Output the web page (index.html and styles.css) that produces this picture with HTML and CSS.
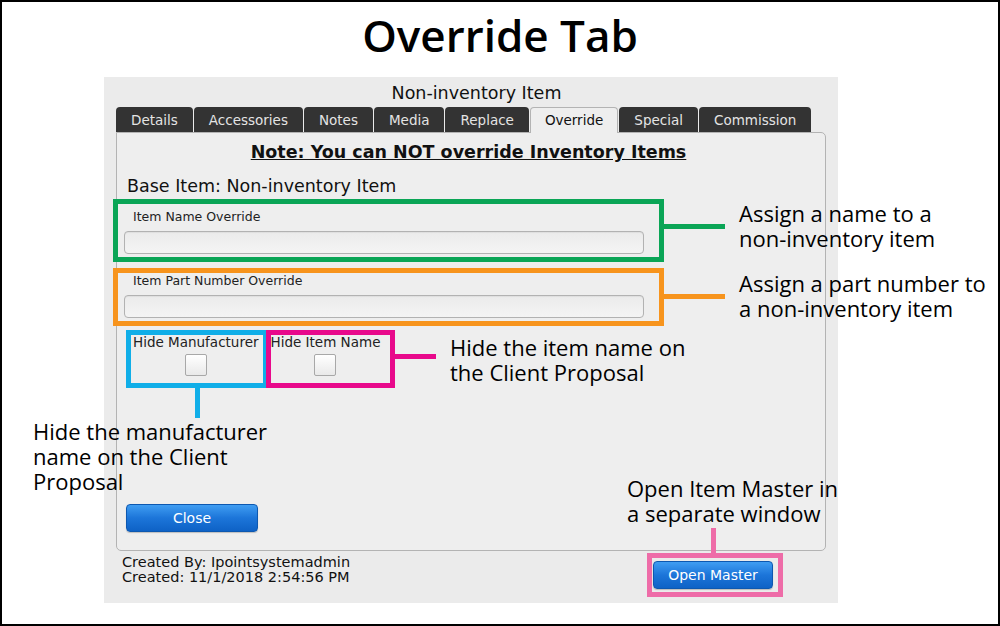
FILE: index.html
```html
<!DOCTYPE html>
<html>
<head>
<meta charset="utf-8">
<link rel="stylesheet" href="styles.css">
</head>
<body>
<div class="frame">
  <h1 class="title">Override Tab</h1>
  <div class="app">
    <div class="app-title">Non-inventory Item</div>
    <div class="tabs">
      <div class="tab">Details</div>
      <div class="tab">Accessories</div>
      <div class="tab">Notes</div>
      <div class="tab">Media</div>
      <div class="tab">Replace</div>
      <div class="tab tab-active">Override</div>
      <div class="tab">Special</div>
      <div class="tab">Commission</div>
    </div>
    <div class="panel">
      <div class="note">Note: You can NOT override Inventory Items</div>
      <div class="base">Base Item: Non-inventory Item</div>
      <div class="field-label first">Item Name Override</div>
      <div class="input"></div>
      <div class="field-label second">Item Part Number Override</div>
      <div class="input"></div>
      <div class="checks">
        <div class="check">
          <div class="check-label">Hide Manufacturer</div>
          <div class="check-box"></div>
        </div>
        <div class="check">
          <div class="check-label">Hide Item Name</div>
          <div class="check-box"></div>
        </div>
      </div>
      <div class="btn btn-close">Close</div>
    </div>
    <div class="footer">
      <div class="created">Created By: Ipointsystemadmin<br>Created: 11/1/2018 2:54:56 PM</div>
      <div class="btn btn-open">Open Master</div>
    </div>
  </div>

  <div class="ann-box ann-green"></div>
  <div class="ann-line ann-line-green"></div>
  <div class="ann-box ann-orange"></div>
  <div class="ann-line ann-line-orange"></div>
  <div class="ann-box ann-blue"></div>
  <div class="ann-line ann-line-blue"></div>
  <div class="ann-box ann-magenta"></div>
  <div class="ann-line ann-line-magenta"></div>
  <div class="ann-box ann-pink"></div>
  <div class="ann-line ann-line-pink"></div>

  <div class="ann-text ann-t-green">Assign a name to a<br>non-inventory item</div>
  <div class="ann-text ann-t-orange">Assign a part number to<br>a non-inventory item</div>
  <div class="ann-text ann-t-magenta">Hide the item name on<br>the Client Proposal</div>
  <div class="ann-text ann-t-blue">Hide the manufacturer<br>name on the Client<br>Proposal</div>
  <div class="ann-text ann-t-pink">Open Item Master in<br>a separate window</div>
</div>
</body>
</html>
```

FILE: styles.css
```css
html, body {
  margin: 0;
  padding: 0;
  background: #fff;
}

.frame {
  position: relative;
  width: 1000px;
  height: 626px;
  box-sizing: border-box;
  overflow: hidden;
  background: #fff;
  box-shadow: inset 0 0 0 2px #000;
  font-family: "DejaVu Sans", Verdana, sans-serif;
  color: #111;
}

.title {
  margin: 0;
  padding-top: 5px;
  height: 60px;
  font-family: "Open Sans", sans-serif;
  font-weight: 600;
  font-size: 44px;
  line-height: 60px;
  text-align: center;
  color: #000;
}

.app {
  margin-top: 12px;
  margin-left: 104px;
  width: 734px;
  height: 526px;
  box-sizing: border-box;
  padding: 6px 12px 0;
  background: #ebebeb;
}

.app-title {
  font-size: 17.5px;
  line-height: 20px;
  text-align: center;
  padding-left: 11px;
  color: #111;
}

.tabs {
  display: flex;
  gap: 1px;
  margin-top: 4px;
  height: 25px;
  align-items: flex-start;
}

.tab {
  height: 25px;
  box-sizing: border-box;
  padding: 2px 15px 0;
  line-height: 23px;
  font-size: 13.5px;
  background: #333;
  color: #e4e4e4;
  border-radius: 4px 4px 0 0;
}

.tab-active {
  position: relative;
  z-index: 2;
  height: 26px;
  margin-bottom: -1px;
  padding: 1px 14px 0;
  background: #eeeeee;
  color: #111;
  border: 1px solid #b3b3b3;
  border-bottom: none;
}

.panel {
  height: 419px;
  box-sizing: border-box;
  display: flex;
  flex-direction: column;
  align-items: flex-start;
  padding: 0 0 18px 7px;
  border: 1px solid #b3b3b3;
  border-radius: 0 5px 5px 5px;
  background: #eeeeee;
}

.note {
  align-self: stretch;
  margin-top: 9px;
  padding-right: 12px;
  font-size: 17.5px;
  font-weight: bold;
  line-height: 20px;
  text-align: center;
  text-decoration: underline;
  color: #111;
}

.base {
  margin-top: 14px;
  margin-left: 3px;
  font-size: 17.5px;
  line-height: 20px;
}

.field-label {
  margin-left: 9px;
  font-size: 12.5px;
  line-height: 16px;
  color: #222;
}

.field-label.first {
  margin-top: 13px;
}

.field-label.second {
  margin-top: 19px;
}

.input {
  margin-top: 6px;
  width: 520px;
  height: 23px;
  box-sizing: border-box;
  border: 1px solid #b2b2b2;
  border-radius: 4px;
  background: linear-gradient(#ebebeb, #f4f4f4);
  box-shadow: inset 0 1px 1px rgba(0, 0, 0, 0.06);
}

.checks {
  display: flex;
  gap: 12px;
  margin-top: 16px;
  margin-left: 9px;
}

.check {
  display: flex;
  flex-direction: column;
  align-items: center;
}

.check-label {
  font-size: 13.5px;
  line-height: 16px;
  color: #222;
}

.check-box {
  margin-top: 4px;
  width: 22px;
  height: 22px;
  box-sizing: border-box;
  border: 1px solid #a8a8a8;
  border-radius: 2px;
  background: linear-gradient(#ffffff, #e9e9e9);
}

.btn {
  box-sizing: border-box;
  height: 28px;
  border: 1px solid #0d58b0;
  border-radius: 4px;
  background: linear-gradient(#3f9df2, #1c75d9 50%, #0e62c6);
  color: #fff;
  font-size: 14px;
  line-height: 26px;
  text-align: center;
  box-shadow: 0 1px 1px rgba(0, 0, 0, 0.2);
}

.btn-close {
  margin-top: auto;
  margin-left: 2px;
  width: 132px;
}

.footer {
  display: flex;
  align-items: flex-start;
}

.created {
  margin-top: 4px;
  margin-left: 6px;
  font-size: 14.5px;
  line-height: 15px;
  color: #111;
}

.btn-open {
  margin-left: auto;
  margin-right: 53px;
  margin-top: 10px;
  width: 120px;
}

/* annotations */
.ann-box {
  position: absolute;
  box-sizing: border-box;
  border: 5px solid;
}

.ann-line {
  position: absolute;
}

.ann-green {
  left: 113px;
  top: 199px;
  width: 551px;
  height: 63px;
  border-color: #0aa556;
}

.ann-line-green {
  left: 664px;
  top: 224px;
  width: 61px;
  height: 5px;
  background: #0aa556;
}

.ann-orange {
  left: 113px;
  top: 268px;
  width: 551px;
  height: 58px;
  border-color: #f7941d;
}

.ann-line-orange {
  left: 664px;
  top: 294px;
  width: 61px;
  height: 5px;
  background: #f7941d;
}

.ann-blue {
  left: 126px;
  top: 330px;
  width: 142px;
  height: 58px;
  border-color: #10aee8;
}

.ann-line-blue {
  left: 195px;
  top: 388px;
  width: 5px;
  height: 30px;
  background: #10aee8;
}

.ann-magenta {
  left: 266px;
  top: 330px;
  width: 129px;
  height: 58px;
  border-color: #e8098b;
}

.ann-line-magenta {
  left: 395px;
  top: 354px;
  width: 41px;
  height: 5px;
  background: #e8098b;
}

.ann-pink {
  left: 647px;
  top: 553px;
  width: 136px;
  height: 44px;
  border-color: #ee6ca8;
}

.ann-line-pink {
  left: 711px;
  top: 528px;
  width: 5px;
  height: 25px;
  background: #ee6ca8;
}

.ann-text {
  position: absolute;
  font-family: "Open Sans", sans-serif;
  font-size: 22px;
  line-height: 25px;
  color: #000;
  white-space: nowrap;
}

.ann-t-green {
  left: 739px;
  top: 201px;
}

.ann-t-orange {
  left: 739px;
  top: 271px;
}

.ann-t-magenta {
  left: 450px;
  top: 335px;
}

.ann-t-blue {
  left: 33px;
  top: 419px;
}

.ann-t-pink {
  left: 627px;
  top: 476px;
}
```
